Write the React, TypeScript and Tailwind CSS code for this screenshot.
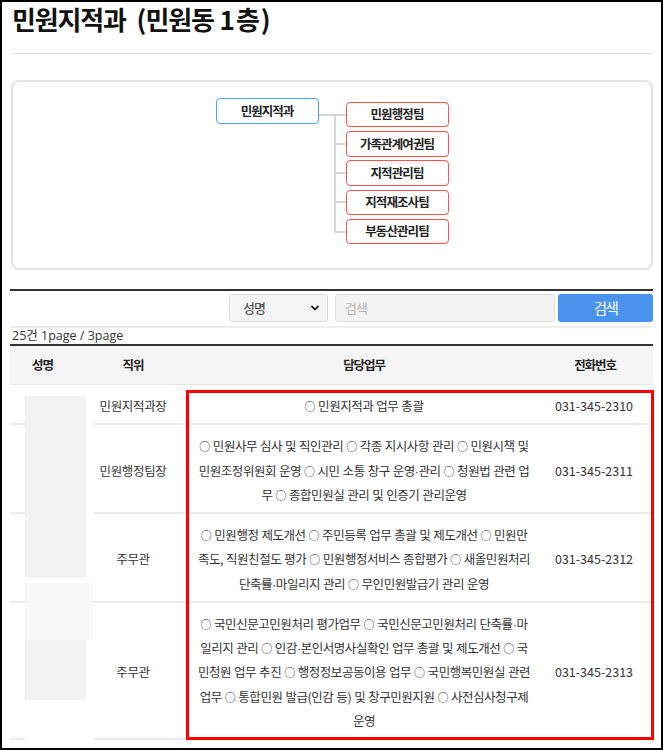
import { ChevronDown } from 'lucide-react'

type Row = {
  title: string
  lines: string[]
  tel: string
}

const teams = ['민원행정팀', '가족관계여권팀', '지적관리팀', '지적재조사팀', '부동산관리팀']

const rows: Row[] = [
  {
    title: '민원지적과장',
    lines: ['○ 민원지적과 업무 총괄'],
    tel: '031-345-2310',
  },
  {
    title: '민원행정팀장',
    lines: [
      '○ 민원사무 심사 및 직인관리 ○ 각종 지시사항 관리 ○ 민원시책 및',
      '민원조정위원회 운영 ○ 시민 소통 창구 운영·관리 ○ 청원법 관련 업',
      '무 ○ 종합민원실 관리 및 인증기 관리운영',
    ],
    tel: '031-345-2311',
  },
  {
    title: '주무관',
    lines: [
      '○ 민원행정 제도개선 ○ 주민등록 업무 총괄 및 제도개선 ○ 민원만',
      '족도, 직원친절도 평가 ○ 민원행정서비스 종합평가 ○ 새올민원처리',
      '단축률·마일리지 관리 ○ 무인민원발급기 관리 운영',
    ],
    tel: '031-345-2312',
  },
  {
    title: '주무관',
    lines: [
      '○ 국민신문고민원처리 평가업무 ○ 국민신문고민원처리 단축률·마',
      '일리지 관리 ○ 인감·본인서명사실확인 업무 총괄 및 제도개선 ○ 국',
      '민청원 업무 추진 ○ 행정정보공동이용 업무 ○ 국민행복민원실 관련',
      '업무 ○ 통합민원 발급(인감 등) 및 창구민원지원 ○ 사전심사청구제',
      '운영',
    ],
    tel: '031-345-2313',
  },
]

// ○ 는 작게, · 는 좁은 글꼴로
function Duty({ text }: { text: string }) {
  return (
    <>
      {text.split(/([○·])/).map((p, k) =>
        p === '○' ? (
          <span key={k} className="text-[11px] leading-none">
            ○
          </span>
        ) : p === '·' ? (
          <span key={k} className="font-['Liberation_Sans',sans-serif] leading-none">
            ·
          </span>
        ) : (
          p
        ),
      )}
    </>
  )
}

function OrgChart() {
  return (
    <div className="mt-[26px] h-[190px] rounded-[8px] border-2 border-[#e3e3e3] ml-[1px]">
      <div className="flex justify-center pt-[16px]">
        {/* 과 */}
        <div className="flex h-[26px] w-[103px] items-center justify-center rounded-[4px] border-[1.5px] border-[#4aa3f2] bg-white text-[12.5px] font-bold tracking-[-1px] text-[#222]">
          민원지적과
        </div>

        {/* 팀 목록 + 연결선 */}
        <div className="mt-[2px] flex flex-col">
          {teams.map((t, i) => (
            <div key={t} className="flex h-[29.25px]">
              <div className="flex w-[15px] flex-col">
                <div className={i === 0 ? 'flex-1 border-b-2 border-[#d6d6d6]' : 'flex-1'} />
                <div className="flex-1" />
              </div>
              <div className="flex w-[12px] flex-col">
                <div
                  className={
                    i > 0
                      ? 'flex-1 border-b-2 border-l-2 border-[#d6d6d6]'
                      : 'flex-1 border-b-2 border-[#d6d6d6]'
                  }
                />
                <div className={i < teams.length - 1 ? 'flex-1 border-l-2 border-[#d6d6d6]' : 'flex-1'} />
              </div>
              <div className="flex items-center">
                <div className="flex h-[25.5px] w-[103px] items-center justify-center rounded-[4px] border-[1.5px] border-[#ff4f4f] bg-white text-[12.5px] font-bold tracking-[-0.9px] text-[#222]">
                  {t}
                </div>
              </div>
            </div>
          ))}
        </div>
      </div>
    </div>
  )
}

function SearchBar() {
  return (
    <div className="mt-[19px] border-t-2 border-[#333]">
      <div className="mt-[3px] flex h-[28px] justify-end">
        <div className="flex w-[99px] items-center justify-between rounded-[3px] border border-[#dcdcdc] bg-[#f5f5f5] pl-[13px] pr-[6px] text-[13px] tracking-[-1px] text-[#333]">
          <span>성명</span>
          <ChevronDown size={12} strokeWidth={3.5} className="text-black" />
        </div>
        <input
          placeholder="검색"
          className="ml-[7px] w-[220px] rounded-[3px] border border-[#dcdcdc] bg-[#f3f3f3] px-[9px] text-[13px] tracking-[-1px] text-[#333] outline-none placeholder:text-[#b3b3b3]"
        />
        <button className="ml-[3px] w-[95px] rounded-[3px] bg-[#4a93ec] text-[14.5px] tracking-[-1.5px] text-white">
          검색
        </button>
      </div>
      <div className="mt-[4px] h-[2px] bg-[#eeeeee]" />
    </div>
  )
}

function StaffTable() {
  return (
    <div>
      <div className="h-[16px] pl-[2px] font-['Open_Sans','Noto_Sans_CJK_KR',sans-serif] text-[12.5px] leading-[16px] text-[#333]">
        25건 1page / 3page
      </div>

      {/* 헤더 */}
      <div className="flex h-[41px] items-center border-t-2 border-b border-[#333] border-b-[#e6e6e6] bg-[#f5f5f5] text-[12.5px] font-bold tracking-[-1.1px] text-[#222]">
        <div className="w-[65px] text-center">성명</div>
        <div className="w-[116px] text-center">직위</div>
        <div className="w-[346px] text-center">담당업무</div>
        <div className="flex-1 text-center">전화번호</div>
      </div>

      {/* 목록 */}
      <div className="relative grid grid-cols-[15px_68px_93px_356px_111px] text-[12.5px] leading-[24.25px] text-[#333]">
        <div className="col-start-2 row-span-4 row-start-1 flex flex-col pt-[11px]">
          <div className="h-[182px] w-[61px] bg-[#f3f3f3]" />
          <div className="mt-[5px] h-[57px] w-[68px] bg-[#f9f9f9]" />
          <div className="h-[60px] w-[61px] bg-[#f3f3f3]" />
        </div>

        {rows.map((r, i) => (
          <div key={i} className="contents">
            <div className="border-b-2 border-[#ececec]" />
            <div className="flex items-center justify-center border-b-2 border-[#ececec] pr-[13px] pb-[5px] pt-[9px] tracking-[-0.35px]">
              {r.title}
            </div>
            <div className="flex flex-col items-center border-b-2 border-[#ececec] pb-[5px] pt-[9px] tracking-[-0.45px] [word-spacing:0.6px]">
              {r.lines.map((l, j) => (
                <div key={j} className="h-[24.25px] whitespace-nowrap">
                  <Duty text={l} />
                </div>
              ))}
            </div>
            <div className="flex items-center justify-center border-b-2 border-[#ececec] pr-[7px] pb-[5px] pt-[9px]">
              {r.tel}
            </div>
          </div>
        ))}

        {/* 표시 박스 */}
        <div className="pointer-events-none absolute left-[176px] top-[5px] h-[350px] w-[468px] border-[3px] border-[#ff0000]" />
      </div>
    </div>
  )
}

export default function App() {
  return (
    <div className="h-[750px] w-[663px] border-2 border-black bg-white font-['Noto_Sans_CJK_KR',sans-serif]">
      <div className="px-[8px]">
        <h1 className="whitespace-nowrap pl-[2px] text-[26px] font-semibold leading-[34px] text-[#111]">
          <span className="tracking-[-1.2px]">민원지적과</span>
          <span className="ml-[11px] tracking-[-1px]">(</span>
          <span className="tracking-[-1.2px]">민원동</span>
          <span className="ml-[6px]">1</span>
          <span className="ml-[1px] tracking-[-1.2px]">층</span>
          <span className="ml-[2px]">)</span>
        </h1>
        <div className="mt-[17px] ml-[2px] h-px bg-[#dedede]" />

        <OrgChart />
        <SearchBar />
        <StaffTable />
      </div>
    </div>
  )
}
